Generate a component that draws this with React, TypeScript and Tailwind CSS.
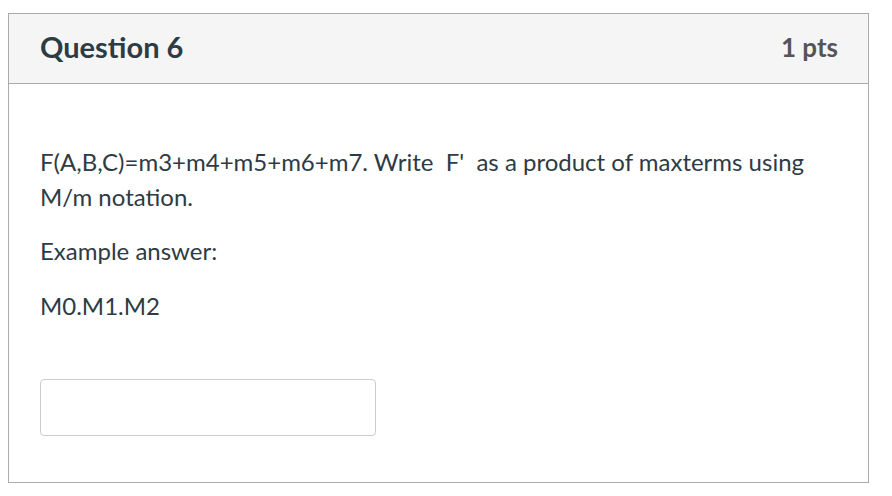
export default function App() {
  return (
    <div className="w-[892px] h-[496px] bg-white pt-[13px] pl-[8px]" style={{ fontFamily: 'Lato, "Noto Sans", sans-serif' }}>
      <div className="w-[861px] h-[470px] border border-[#ababab] flex flex-col">
        <header className="h-[70px] bg-[#f5f5f5] border-b border-[#ababab] flex items-center justify-between pl-[31px] pr-[30px] pb-[3px] shrink-0">
          <h2 className="text-[29px] font-bold text-[#2d3b45]">Question 6</h2>
          <span className="text-[26px] font-bold text-[#555555]">1 pts</span>
        </header>
        <div className="flex-1 pl-[31px] pr-[31px] pt-[60px] text-[24px] leading-[35px] text-[#2d3b45]">
          <p>F(A,B,C)=m3+m4+m5+m6+m7. Write&nbsp; F'&nbsp; as a product of maxterms using M/m notation.</p>
          <p className="mt-[19px]">Example answer:</p>
          <p className="mt-[20px]">M0.M1.M2</p>
          <input
            type="text"
            className="mt-[56px] block w-[336px] h-[57px] border border-[#c7cdd1] rounded-[4px] bg-white"
          />
        </div>
      </div>
    </div>
  );
}
